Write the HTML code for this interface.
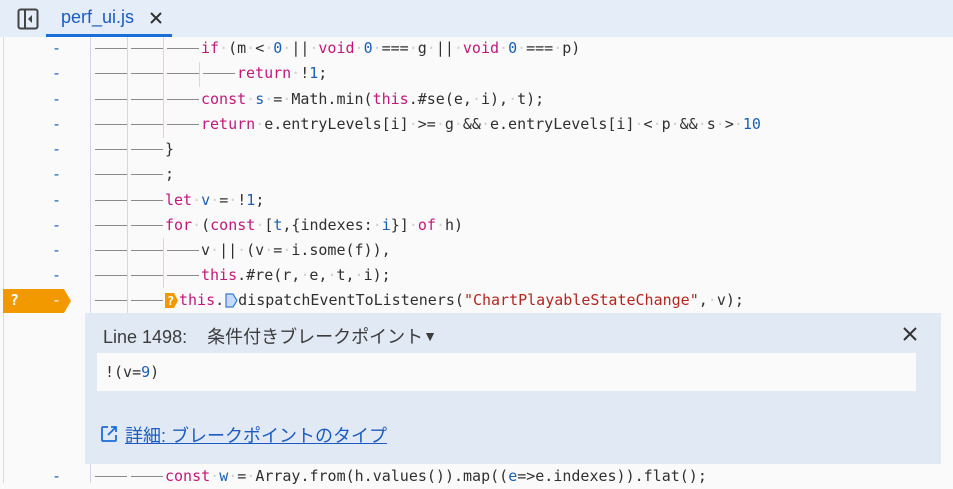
<!DOCTYPE html>
<html><head><meta charset="utf-8"><style>
*{margin:0;padding:0;box-sizing:border-box}
body{width:953px;height:483px;overflow:hidden;background:#fafafa;position:relative;font-family:"DejaVu Sans Mono","Liberation Mono",monospace}
.tabbar{position:absolute;left:0;top:0;width:953px;height:37px;background:#e5edf8}
.tab{position:absolute;left:46px;top:0;height:37px;width:126px;border-bottom:3px solid #1a6ed8}
.tab span{position:absolute;left:15px;top:7px;font:18px "Liberation Sans",sans-serif;color:#1a5cc0}
.gut{position:absolute;left:3px;top:37px;width:1px;height:446px;background:#d6dbe3}
.vl{position:absolute;width:1px;background:#d0d9e8}
.ln{position:absolute;left:0;height:25px;width:953px;font-size:15px;line-height:25px;color:#303030;white-space:pre}
.ln .n{position:absolute;left:52px;color:#1a5fb4}
.ln .c{position:absolute;left:93px}
.t{display:inline-block;width:36px;height:25px;position:relative;vertical-align:top}
.t:after{content:"";position:absolute;left:2px;right:2px;top:12px;height:1px;background:#8a8a8a}
.k{color:#c2187a}.b{color:#1a5fb4}.s{color:#b3261e}.d{color:#cfcfcf}
.panel{position:absolute;left:85px;top:313px;width:856px;height:151px;background:#e1e9f5}
.ttl{position:absolute;left:18px;top:10px;font:18px "Liberation Sans","Noto Sans CJK JP",sans-serif;color:#3c3c3c}
.inp{position:absolute;left:12px;top:40px;width:819px;height:38px;background:#fafafa;font-size:15px;line-height:38px;padding-left:8px;color:#303030}
.lnk{position:absolute;left:40px;top:109px;font:18px "Liberation Sans","Noto Sans CJK JP",sans-serif;color:#1a5cc0;text-decoration:underline}
</style></head><body>
<div class="tabbar">
<svg style="position:absolute;left:17px;top:8px" width="22" height="22" viewBox="0 0 22 22"><rect x="1.5" y="1.5" width="19" height="19" rx="2" fill="none" stroke="#444" stroke-width="2"/><line x1="8" y1="2" x2="8" y2="20" stroke="#444" stroke-width="2"/><path d="M15 7l-4 4 4 4z" fill="#444"/></svg>
<div class="tab"><span>perf_ui.js</span>
<svg style="position:absolute;left:104px;top:12px" width="12" height="12" viewBox="0 0 12 12"><path d="M1 1L11 11M11 1L1 11" stroke="#333" stroke-width="2"/></svg></div>
</div>
<div class="gut"></div>
<div class="vl" style="left:90px;top:37px;height:446px"></div>
<div class="vl" style="left:127px;top:37px;height:276px"></div>
<div class="vl" style="left:163px;top:37px;height:101px"></div>
<div class="vl" style="left:163px;top:238px;height:50px"></div>
<div class="vl" style="left:199px;top:62px;height:25px"></div>

<div class="ln" style="top:36px"><span class="n">-</span><span class="c"><span class="t"></span><span class="t"></span><span class="t"></span><span class="k">if</span><span class="d">·</span>(m<span class="d">·</span>&lt;<span class="d">·</span><span class="b">0</span><span class="d">·</span>||<span class="d">·</span><span class="k">void</span><span class="d">·</span><span class="b">0</span><span class="d">·</span>===<span class="d">·</span>g<span class="d">·</span>||<span class="d">·</span><span class="k">void</span><span class="d">·</span><span class="b">0</span><span class="d">·</span>===<span class="d">·</span>p)</span></div>
<div class="ln" style="top:61px"><span class="n">-</span><span class="c"><span class="t"></span><span class="t"></span><span class="t"></span><span class="t"></span><span class="k">return</span><span class="d">·</span>!<span class="b">1</span>;</span></div>
<div class="ln" style="top:87px"><span class="n">-</span><span class="c"><span class="t"></span><span class="t"></span><span class="t"></span><span class="k">const</span><span class="d">·</span><span class="b">s</span><span class="d">·</span>=<span class="d">·</span>Math.min(<span class="k">this</span>.#se(e,<span class="d">·</span>i),<span class="d">·</span>t);</span></div>
<div class="ln" style="top:112px"><span class="n">-</span><span class="c"><span class="t"></span><span class="t"></span><span class="t"></span><span class="k">return</span><span class="d">·</span>e.entryLevels[i]<span class="d">·</span>&gt;=<span class="d">·</span>g<span class="d">·</span>&amp;&amp;<span class="d">·</span>e.entryLevels[i]<span class="d">·</span>&lt;<span class="d">·</span>p<span class="d">·</span>&amp;&amp;<span class="d">·</span>s<span class="d">·</span>&gt;<span class="d">·</span><span class="b">10</span></span></div>
<div class="ln" style="top:137px"><span class="n">-</span><span class="c"><span class="t"></span><span class="t"></span>}</span></div>
<div class="ln" style="top:162px"><span class="n">-</span><span class="c"><span class="t"></span><span class="t"></span>;</span></div>
<div class="ln" style="top:188px"><span class="n">-</span><span class="c"><span class="t"></span><span class="t"></span><span class="k">let</span><span class="d">·</span><span class="b">v</span><span class="d">·</span>=<span class="d">·</span>!<span class="b">1</span>;</span></div>
<div class="ln" style="top:213px"><span class="n">-</span><span class="c"><span class="t"></span><span class="t"></span><span class="k">for</span><span class="d">·</span>(<span class="k">const</span><span class="d">·</span>[<span class="b">t</span>,{indexes:<span class="d">·</span><span class="b">i</span>}]<span class="d">·</span><span class="k">of</span><span class="d">·</span>h)</span></div>
<div class="ln" style="top:238px"><span class="n">-</span><span class="c"><span class="t"></span><span class="t"></span><span class="t"></span>v<span class="d">·</span>||<span class="d">·</span>(v<span class="d">·</span>=<span class="d">·</span>i.some(f)),</span></div>
<div class="ln" style="top:263px"><span class="n">-</span><span class="c"><span class="t"></span><span class="t"></span><span class="t"></span><span class="k">this</span>.#re(r,<span class="d">·</span>e,<span class="d">·</span>t,<span class="d">·</span>i);</span></div>
<svg style="position:absolute;left:3px;top:289px" width="68" height="24" viewBox="0 0 68 24"><path d="M0 0H61L68 12L61 24H0z" fill="#f29900"/></svg>
<div class="ln" style="top:288px"><span style="position:absolute;left:10px;color:#fff;font-weight:bold">?</span><span class="n" style="color:#fff">-</span><span class="c"><span class="t"></span><span class="t"></span><span style="display:inline-block;width:14px;height:25px;position:relative;vertical-align:top"><svg style="position:absolute;left:0;top:5px" width="14" height="15" viewBox="0 0 14 15"><path d="M0 0H9L13 7.5L9 15H0z" fill="#f29900"/><text x="2" y="12" font-size="12" font-weight="bold" fill="#fff" font-family="DejaVu Sans Mono">?</text></svg></span><span class="k">this</span>.<span style="display:inline-block;width:14px;height:25px;position:relative;vertical-align:top"><svg style="position:absolute;left:1px;top:5px" width="13" height="15" viewBox="0 0 13 15"><path d="M1 1H8L12 7.5L8 14H1z" fill="#c4daf7" stroke="#3a7bd5" stroke-width="1.2"/></svg></span>dispatchEventToListeners(<span class="s">"ChartPlayableStateChange"</span>,<span class="d">·</span>v);</span></div>

<div class="panel">
<div class="ttl">Line 1498:&nbsp;&nbsp;&nbsp; 条件付きブレークポイント<span style="font-size:14px;vertical-align:2px">▼</span></div>
<svg style="position:absolute;left:817px;top:13px" width="16" height="16" viewBox="0 0 16 16"><path d="M2 2L14 14M14 2L2 14" stroke="#333" stroke-width="2"/></svg>
<div class="inp">!(v=<span class="b">9</span>)</div>
<svg style="position:absolute;left:15px;top:112px" width="18" height="18" viewBox="0 0 18 18"><path d="M8 2H3a1 1 0 0 0-1 1v12a1 1 0 0 0 1 1h12a1 1 0 0 0 1-1v-5M11 2h5v5M16 2L8 10" fill="none" stroke="#1a6ed8" stroke-width="1.8"/></svg>
<div class="lnk">詳細: ブレークポイントのタイプ</div>
</div>

<div class="ln" style="top:464px"><span class="n">-</span><span class="c"><span class="t"></span><span class="t"></span><span class="k">const</span><span class="d">·</span><span class="b">w</span><span class="d">·</span>=<span class="d">·</span>Array.from(h.values()).map((<span class="b">e</span>=&gt;e.indexes)).flat();</span></div>
</body></html>
